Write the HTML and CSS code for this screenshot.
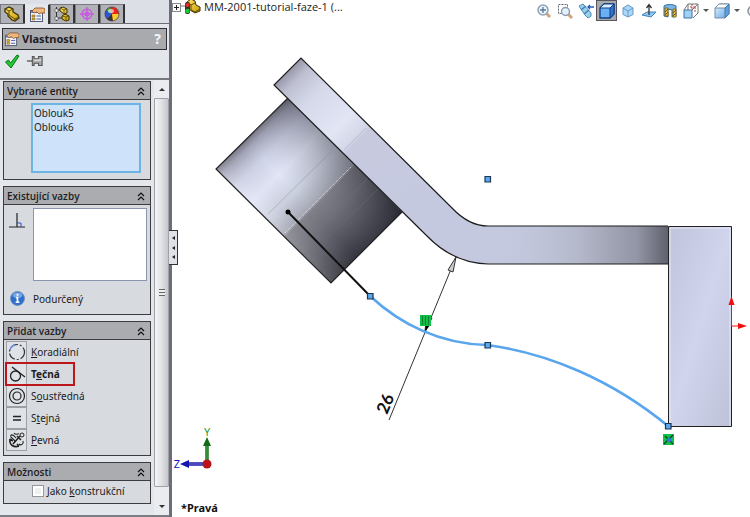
FILE: index.html
```html
<!DOCTYPE html>
<html lang="cs">
<head>
<meta charset="utf-8">
<title>Vlastnosti</title>
<link rel="stylesheet" href="styles.css">
</head>
<body>
<svg class="defs" aria-hidden="true">
  <defs>
    <linearGradient id="yellow" x2="1" y2="1"><stop stop-color="#ffe866"/><stop offset="1" stop-color="#c99a08"/></linearGradient>
    <linearGradient id="cube" x2="1" y2="1"><stop stop-color="#eaf6ff"/><stop offset="1" stop-color="#5ba3e6"/></linearGradient>
    <symbol id="chevrons" viewBox="0 0 8 10"><path d="M1 5l3-3 3 3M1 9l3-3 3 3" fill="none" stroke="#111" stroke-width="1.2"/></symbol>
    <symbol id="props" viewBox="0 0 16 16">
      <rect x="1.500" y="3.500" width="12" height="11" fill="#f2f4fb" stroke="#555b70"/>
      <path d="M2 4h11v2H2z" fill="#687fc0"/>
      <path d="M3 8h3v2H3zM3 11h3v2H3z" fill="#e3a928" stroke="#765a20" stroke-width=".5"/>
      <path d="M7.500 9H12M7.500 12H12" stroke="#4b5f9d"/>
      <path d="M3 4l3-3h8l2 1v4h-4l-2 1-2-2-3 1z" fill="#eeb77e" stroke="#7c4c25" stroke-width=".8"/>
    </symbol>
    <symbol id="part" viewBox="0 0 16 16">
      <path d="M1 3l4-2 4 2v3l5 3 1 3-4 3-3-1-4-4V8L1 6z" fill="url(#yellow)" stroke="#3d3205" stroke-width="1.300"/>
      <path d="M1 3l4 2 4-2M5 5v4l6 4 4-2M11 13v2" fill="none" stroke="#5e4b06"/>
    </symbol>
  </defs>
</svg>
<div class="app">
  <aside class="panel">
    <nav class="tabs" aria-label="Karty">
      <button class="tab" aria-label="Strom"><svg viewBox="0 0 16 16"><use href="#part"/></svg></button>
      <button class="tab tab-active" aria-label="Vlastnosti"><svg viewBox="0 0 16 16"><use href="#props"/></svg></button>
      <button class="tab" aria-label="Konfigurace"><svg viewBox="0 0 16 16"><path d="M2.500 1v14M3 4h5M3 12h5" stroke="#333" fill="none"/><path d="M1 3h3v3H1zM1 11h3v3H1z" fill="#fff" stroke="#555" stroke-width=".7"/><path d="M6 2l3-1 4 2v4l-3 1-4-3zM8 10l3-2 4 2v4l-3 1-4-2z" fill="url(#yellow)" stroke="#3d3205"/><path d="M6 2l4 2 3-1M10 4v4M8 10l4 1 3-1M12 11v4" fill="none" stroke="#5e4b06" stroke-width=".8"/></svg></button>
      <button class="tab" aria-label="Kóty"><svg viewBox="0 0 16 16" fill="none" stroke="#c65be0" stroke-width="1.400"><circle cx="8" cy="8" r="4.800"/><circle cx="8" cy="8" r="1.800"/><path d="M8 1v14M1 8h14"/></svg></button>
      <button class="tab" aria-label="Vzhled"><svg viewBox="0 0 16 16"><circle cx="8" cy="8" r="7" fill="#e9251c"/><path d="M8 8L2 4A7 7 0 0 0 3 13z" fill="#2759d1"/><path d="M8 8L3 13a7 7 0 0 0 6 2z" fill="#30343c"/><path d="M8 8l1 7A7 7 0 0 0 15 8z" fill="#f4ce28"/><path d="M8 8L2 4a7 7 0 0 1 4-3z" fill="#35a947"/><ellipse cx="7" cy="5" rx="3" ry="2" fill="#fff" opacity=".6"/><circle cx="8" cy="8" r="7" fill="none" stroke="#493d44" stroke-width=".7"/></svg></button>
    </nav>
    <header class="title">
      <svg class="title-icon" viewBox="0 0 16 16"><use href="#props"/></svg>
      <h1>Vlastnosti</h1>
      <button class="help" aria-label="Nápověda">?</button>
    </header>
    <div class="actions">
      <button aria-label="OK"><svg viewBox="0 0 16 16"><path d="M1.500 9l3-2 2 3L13 2l2 1-8 12z" fill="#24c836" stroke="#087615"/></svg></button>
      <button aria-label="Připnout"><svg viewBox="0 0 18 16"><path d="M0 8h7" stroke="#555" stroke-width="1.500"/><path d="M6 3h2v2.500h5V3h4v10h-4v-2.500H8V13H6z" fill="#a9aaad" stroke="#555" stroke-width="1.200"/><path d="M8 7h8" stroke="#fff"/></svg></button>
    </div>
    <div class="content">
      <div class="groups">
        <section class="group">
          <h2><button>Vybrané entity<svg><use href="#chevrons"/></svg></button></h2>
          <div class="group-body">
            <ul class="entities"><li>Oblouk5</li><li>Oblouk6</li></ul>
          </div>
        </section>
        <section class="group">
          <h2><button>Existující vazby<svg><use href="#chevrons"/></svg></button></h2>
          <div class="group-body">
            <div class="existing">
              <svg class="relation-icon" viewBox="0 0 16 16"><path d="M8 1v14M0 15h16" fill="none" stroke="#222" stroke-width="1.200"/><path d="M8 11h4v4" fill="none" stroke="#2a55c8"/></svg>
              <ul class="relations-list" aria-label="Existující vazby"></ul>
            </div>
            <p class="status"><svg viewBox="0 0 16 16"><circle cx="8" cy="8" r="7.400" fill="#2d6fc9" stroke="#6c8ebb"/><ellipse cx="8" cy="4.500" rx="5" ry="3" fill="#b5d5f8" opacity=".55"/><path d="M8 3v2M6.500 7H8v5M6 12h4" fill="none" stroke="#fff" stroke-width="1.800"/></svg>Podurčený</p>
          </div>
        </section>
        <section class="group">
          <h2><button>Přidat vazby<svg><use href="#chevrons"/></svg></button></h2>
          <div class="group-body add">
            <button class="relation"><span class="tile"><svg viewBox="0 0 18 18" fill="none"><circle cx="9" cy="9" r="7.500" stroke="#333" stroke-width="1.200" stroke-dasharray="8 2 2 2"/><path d="M2 7a7 7 0 0 1 5-5" stroke="#6c8fd1" stroke-width="1.500"/></svg></span><span><u>K</u>oradiální</span></button>
            <button class="relation highlighted"><span class="tile"><svg viewBox="0 0 18 18" fill="none" stroke="#222" stroke-width="1.300"><circle cx="7.500" cy="11" r="5"/><path d="M4 2l13 10"/></svg></span><span>T<u>e</u>čná</span></button>
            <button class="relation"><span class="tile"><svg viewBox="0 0 18 18" fill="none" stroke="#222" stroke-width="1.200"><circle cx="9" cy="9" r="7.500"/><circle cx="9" cy="9" r="4"/></svg></span><span>S<u>o</u>ustředná</span></button>
            <button class="relation"><span class="tile"><svg viewBox="0 0 18 18" stroke="#222" stroke-width="1.500"><path d="M5 7.500h8M5 11h8"/></svg></span><span>S<u>t</u>ejná</span></button>
            <button class="relation"><span class="tile"><svg viewBox="0 0 18 18" fill="none" stroke="#222"><path d="M5 13l7-8M2 8c-1 6 4 9 9 7M2 8l3 2M11 15l-2-2M9 5l4 4" stroke-width="1.600"/><circle cx="14" cy="4" r="2"/><path d="M8 7C5 3 2 3 3 6c1 2 4 2 4 5M11 13c2 2 5 0 4-3M6 2c2 3 4 0 5 1" stroke-width="1.100"/></svg></span><span><u>P</u>evná</span></button>
          </div>
        </section>
        <section class="group">
          <h2><button>Možnosti<svg><use href="#chevrons"/></svg></button></h2>
          <div class="group-body options">
            <input type="checkbox" id="construction"><label for="construction">Jako <u>k</u>onstrukční</label>
          </div>
        </section>
      </div>
      <div class="scroll" aria-hidden="true">
        <span class="arrow arrow-up"></span>
        <span class="thumb"><i></i></span>
        <span class="arrow arrow-down"></span>
      </div>
    </div>
    <button class="collapse" aria-label="Skrýt panel"><i></i><i></i><i></i></button>
  </aside>
  <main class="view">
    <div class="bar">
      <div class="tree">
        <button class="expand" aria-label="Rozbalit"></button>
        <svg class="tree-icon" viewBox="0 0 20 17"><path d="M0 7h4" stroke="#777"/><path d="M6 3l4-3 4 2 1 4 4 2v4l-5 2-5-3-4-4z" fill="url(#yellow)" stroke="#3d3205"/><path d="M6 4l4 2 4-2M10 6v5l4 2 5-3" fill="none" stroke="#5e4b06"/><rect x="4" y="3" width="5" height="12" rx="2" fill="#333"/><circle cx="6.500" cy="6" r="2" fill="#ed2b20"/><circle cx="6.500" cy="12" r="2.300" fill="#18c83a"/></svg>
        <span>MM-2001-tutorial-faze-1 (...</span>
      </div>
      <div class="tools">
        <button aria-label="Přiblížit vše"><svg viewBox="0 0 16 16"><path d="M10 10l4 4" stroke="#d0a37a" stroke-width="3"/><circle cx="7" cy="7" r="5" fill="#e8f4fd" stroke="#8fa1b5" stroke-width="1.500"/><path d="M7 4v6M4 7h6" stroke="#5f7790" stroke-width="1.300"/></svg></button>
        <button aria-label="Přiblížit výběr"><svg viewBox="0 0 16 16"><path d="M11 11l4 4" stroke="#d0a37a" stroke-width="3"/><path d="M1.500 1.500h9v9h-9z" fill="none" stroke="#667" stroke-dasharray="2 1"/><circle cx="8.500" cy="8.500" r="4" fill="#e3f0fa" stroke="#8a9cb0" stroke-width="1.400"/></svg></button>
        <button aria-label="Předchozí pohled"><svg viewBox="0 0 16 16"><path d="M1 3l4-2 8 9v3l-3 2-3-3z" fill="#9bd0f0" stroke="#4b8db9"/><path d="M3 7l5-4M6 11l5-4" stroke="#3f80ab" stroke-width="1.500"/><path d="M10 4h6M12 2l-2 2 2 2" fill="none" stroke="#2457bb" stroke-width="1.300"/></svg></button>
        <button class="pressed" aria-label="Stínovaný s hranami"><svg viewBox="0 0 16 16"><path d="M1 5l4-4h10v10l-4 4H1z" fill="#69b1f4" stroke="#123c83" stroke-width="1.300"/><path d="M1 5l4-4h10l-4 4z" fill="#d8efff" stroke="#123c83"/><path d="M11 5l4-4v10l-4 4z" fill="#2d76c8" stroke="#123c83"/></svg></button>
        <button aria-label="Izometrický"><svg viewBox="0 0 16 16"><path d="M8 2l5 3v6.500L8 14l-5-2.500V5z" fill="#acd7f8" stroke="#6699c8"/><path d="M3 5l5 3 5-3M8 8v6" fill="none" stroke="#6699c8"/></svg></button>
        <button aria-label="Kolmo k"><svg viewBox="0 0 16 16"><path d="M1 12l5-3h9l-5 5z" fill="#8bc8f3" stroke="#4683b7"/><path d="M8 12V2M5.500 5L8 1.500 10.500 5" fill="none" stroke="#333" stroke-width="1.300"/></svg></button>
        <button aria-label="Řez"><svg viewBox="0 0 16 16"><path d="M2 3c2-2 9-2 12 0v10l-4 1V7L6 6v8l-4-1z" fill="#78b5e8" stroke="#356c9f"/><path d="M3 5h3v8H3zM11 6h3v8h-3z" fill="#f4c637" stroke="#8a6810"/><path d="M3 9l3-3M3 12l3-3M11 10l3-3M11 13l3-3" stroke="#765510"/></svg></button>
        <button aria-label="Orientace pohledu"><svg viewBox="0 0 16 16"><path d="M1 7h8v8H1z" fill="#9fd0f6" stroke="#42729f"/><path d="M1 7l4-6h10v9l-5 5M5 1v6M9 7l6-6" fill="none" stroke="#777"/><path d="M9 1v5M7 4h5M12 4v6" fill="none" stroke="#b84b4b" stroke-dasharray="2 1"/></svg></button>
        <button class="more" aria-label="Další orientace"><i></i></button>
        <button aria-label="Styl zobrazení"><svg viewBox="0 0 16 16"><path d="M1 5l4-4h10v10l-4 4H1z" fill="url(#cube)" stroke="#768da6"/><path d="M1 5l4-4h10l-4 4z" fill="#fff" stroke="#768da6"/><path d="M11 5l4-4v10l-4 4z" fill="#5b9fe2" stroke="#4c7cac"/></svg></button>
        <button class="more" aria-label="Další styly"><i></i></button>
        <button class="cut" aria-label="Skrýt/zobrazit"><svg viewBox="0 0 16 16"><circle cx="11" cy="8" r="5" fill="#eef1f5" stroke="#8c929c" stroke-width="1.500"/></svg></button>
      </div>
    </div>
    <svg class="model" viewBox="172 0 578 517" preserveAspectRatio="xMinYMin meet" role="img" aria-label="Model dílu">
      <defs>
        <linearGradient id="cyl" gradientUnits="userSpaceOnUse" x1="216" y1="169" x2="331" y2="283">
          <stop stop-color="#73727f"/><stop offset=".05" stop-color="#a1a3b6"/><stop offset=".1" stop-color="#b8bbce"/><stop offset=".16" stop-color="#ced2e6"/><stop offset=".3" stop-color="#e2e6f7"/><stop offset=".45" stop-color="#cbd0df"/><stop offset=".58" stop-color="#a5a8b4"/><stop offset=".6" stop-color="#818089"/><stop offset=".72" stop-color="#6d6e77"/><stop offset=".85" stop-color="#53545d"/><stop offset="1" stop-color="#34343d"/>
        </linearGradient>
        <linearGradient id="cylShade" gradientUnits="userSpaceOnUse" x1="216" y1="169" x2="288" y2="98">
          <stop stop-color="#fff" stop-opacity=".18"/><stop offset=".4" stop-color="#889" stop-opacity="0"/><stop offset="1" stop-color="#171822" stop-opacity=".36"/>
        </linearGradient>
        <linearGradient id="plate" gradientUnits="userSpaceOnUse" x1="287" y1="72" x2="440" y2="223">
          <stop stop-color="#9697a7"/><stop offset=".06" stop-color="#bec0d2"/><stop offset=".17" stop-color="#d5d9ea"/><stop offset=".35" stop-color="#e2e5f4"/><stop offset=".44" stop-color="#d3d7e8"/><stop offset=".46" stop-color="#c7cadf"/><stop offset="1" stop-color="#c5c9df"/>
        </linearGradient>
        <linearGradient id="arm" gradientUnits="userSpaceOnUse" x1="488" y1="0" x2="668" y2="0">
          <stop stop-color="#c5c9df" stop-opacity="0"/><stop offset=".5" stop-color="#b4b8ca"/><stop offset=".83" stop-color="#9295a5"/><stop offset="1" stop-color="#60616d"/>
        </linearGradient>
        <linearGradient id="block" x2="1" y2="1"><stop stop-color="#bfc4dc"/><stop offset=".5" stop-color="#d0d4ed"/><stop offset="1" stop-color="#bdc2d8"/></linearGradient>
      </defs>
      <path d="M288 98L216 169 331 283 402 212z" fill="url(#cyl)"/>
      <path d="M288 98L216 169 331 283 402 212z" fill="url(#cylShade)"/>
      <path d="M285 233l66-66" stroke="#e5e6eb" stroke-dasharray="1 1"/>
      <path d="M268 214l63-62M298 247l74-73M309 257l73-72" stroke="#777984" stroke-width=".5" opacity=".7"/>
      <path d="M288 98L216 169 331 283 402 212" fill="none" stroke="#222" stroke-width="1.200"/>
      <path d="M301 58L452 208Q469 226 488 226H668V264H488Q453 263 427 236L274 85z" fill="url(#plate)"/>
      <path d="M488 226h180v38H488z" fill="url(#arm)"/>
      <path d="M668 226H488Q469 226 452 208L301 58 274 85 427 236Q453 263 488 264H668" fill="none" stroke="#1d1d1d" stroke-width="1.200"/>
      <path d="M344 150l22-22" stroke="#aaaebc" stroke-width=".6"/>
      <path d="M668.500 226.500h63v200h-63z" fill="url(#block)" stroke="#222"/>
      <path d="M670 425v-197h60v198" fill="none" stroke="#e7e9f7"/>
      <path d="M288 212l82 84" stroke="#111" stroke-width="2"/><circle cx="288" cy="212" r="2.500"/>
      <g stroke="#333" fill="none"><path d="M389 420l67-163"/><path d="M456 257l-8 13 5 2z" fill="#ccc"/><path d="M425 331l1-10 6-3z" fill="#fff"/></g>
      <path d="M425 332l1-9 4 2z"/>
      <path d="M370 296C400 324 440 344 487 345C548 353 612 380 668 426" fill="none" stroke="#59a5ee" stroke-width="2.600"/>
      <path d="M420 315h11v11h-11z" fill="#0ac244"/><path d="M422.500 316v9M425.500 316v9M428.500 316v9" stroke="#147c35"/>
      <g fill="#5ba8f0" stroke="#1c3550" stroke-width="1.200"><path d="M485 176.500h5.500v5.500H485zM367.500 293.500h5.500v5.500h-5.500zM485 342.500h5.500v5.500H485zM665.500 423.500h5.500v5.500h-5.500z"/></g>
      <path d="M663 434h11v11h-11z" fill="#0ac244"/><path d="M664 444l9-9M665 436l8 8" stroke="#123c30" stroke-width="1.200"/><circle cx="669" cy="440" r="2.200" fill="#3179d1"/>
      <path d="M731.500 326V301M731 326h9" stroke="#e11" fill="none"/><path d="M731.500 296l-3 9h6zM747 326l-9-3v6z" fill="#f00e0e"/>
      <text class="dimension" transform="translate(387 415) rotate(-67)">26</text>
      <path d="M207 464v-20" stroke="#17731d" stroke-width="3.500"/><path d="M207 464v-20" stroke="#4fac54"/><path d="M207 437l-4 9h8z" fill="#116a17"/>
      <path d="M207 464h-20" stroke="#1b1ba6" stroke-width="3.500"/><path d="M207 464h-20" stroke="#7777e0"/><path d="M180 464l9-4v8z" fill="#1515b0"/><circle cx="207" cy="464" r="4.500" fill="#b81218"/>
      <text class="axis axis-y" x="207" y="436">Y</text><text class="axis axis-z" x="177" y="468">Z</text>
    </svg>
    <p class="view-name">*Pravá</p>
  </main>
</div>
</body>
</html>
```
FILE: styles.css
```css
* { box-sizing: border-box; }
body { margin: 0; font: 10px/14px "Noto Sans", "Open Sans", sans-serif; color: #1c1c22; background: #fff; }
h1, h2, p, ul { margin: 0; padding: 0; font-size: inherit; }
ul { list-style: none; }
button { margin: 0; padding: 0; border: 0; background: none; font: inherit; color: inherit; text-align: left; }
svg { display: block; }
.defs { position: absolute; width: 0; height: 0; }
.app { display: flex; min-height: 100vh; }

.panel { position: relative; display: flex; flex-direction: column; flex: none; width: 172px; background: #e3e6eb; border-right: 3px solid #6c6e76; }
.tabs { display: flex; height: 24px; padding-top: 4px; border-bottom: 1px solid #6c6e74; background: #dcdfe5; }
.tab { display: grid; place-items: center; width: 25px; height: 19px; background: #b1b2b7; border: 1px solid #77797e; border-right: 2px solid #333; border-bottom: 0; }
.tab svg { width: 16px; height: 16px; }
.tab-active { height: 20px; background: #e3e6eb; border-color: #e3e6eb; border-right-color: #333; }
.title { display: flex; align-items: center; gap: 3px; height: 22px; margin: 4px 2px 0; padding: 0 5px 0 1px; background: #a9aaae; border: 1px solid #303034; }
.title-icon { width: 15px; height: 15px; }
.title h1 { flex: 1; font: bold 11px/20px "Noto Sans", sans-serif; }
.help { color: #f4f4f6; font-weight: bold; font-size: 14px; }
.actions { display: flex; align-items: center; gap: 7px; height: 30px; padding: 0 4px 6px; border-bottom: 2px solid #77797f; }
.actions svg { height: 16px; width: 16px; }

.content { display: flex; flex: 1; border-bottom: 2px solid #7b7d84; }
.groups { display: flex; flex-direction: column; gap: 6px; flex: 1; padding: 1px 3px 8px; }
.group { border: 1px solid #3b3b40; background: #d7dade; }
.group h2 { background: #abacb0; border-bottom: 1px solid #3b3b40; }
.group h2 button { display: flex; align-items: center; justify-content: space-between; width: 100%; height: 17px; padding: 0 5px 0 3px; font-family: "Open Sans", sans-serif; font-weight: 600; }
.group h2 svg { width: 8px; height: 10px; }
.group-body { padding: 3px; }
.entities { height: 70px; margin: 0 6px 3px 24px; padding: 1px; background: #cee3f9; border: 2px solid #6bb4e5; }
.existing { display: grid; grid-template-columns: 16px 1fr; gap: 8px; padding-left: 2px; }
.relation-icon { width: 16px; height: 16px; margin-top: 4px; }
.relations-list { height: 73px; background: #fff; border: 1px solid #8b95b0; }
.status { display: flex; align-items: center; gap: 8px; margin: 10px 3px 5px; }
.status svg { width: 15px; height: 15px; }
.add { padding: 1px 2px 4px; }
.relation { display: flex; align-items: center; gap: 4px; width: 68px; height: 22px; white-space: nowrap; }
.tile { display: grid; place-items: center; flex: none; width: 21px; height: 22px; background: #dfe2e6; border: 1px solid #9d9fa5; }
.tile svg { width: 18px; height: 18px; }
.highlighted { font-weight: bold; outline: 2px solid #bd171d; outline-offset: -1px; }
.options { display: flex; align-items: center; gap: 3px; padding: 3px 3px 5px 28px; white-space: nowrap; }
.options input { appearance: none; width: 12px; height: 12px; margin: 0; border: 1px solid #95979c; background: #eeeff1; box-shadow: inset 0 0 0 2px #fff; }

.scroll { display: flex; flex-direction: column; width: 15px; background: #ebecef; }
.arrow { display: grid; place-items: center; height: 18px; }
.arrow::before { content: ""; border: 3px solid transparent; }
.arrow-up::before { border-top: 0; border-bottom-color: #333; }
.arrow-down { height: 28px; padding-top: 10px; }
.arrow-down::before { border-bottom: 0; border-top-color: #333; }
.thumb { display: grid; place-items: center; flex: 1; background: linear-gradient(90deg, #f5f5f6, #e1e2e5 50%, #c5c7cd); border: 1px solid #9fa1a8; border-radius: 1px; }
.thumb i { width: 6px; height: 7px; background: repeating-linear-gradient(#666 0 1px, #eee 1px 3px); }
.collapse { position: absolute; top: 230px; right: -9px; display: flex; flex-direction: column; align-items: center; justify-content: space-evenly; width: 9px; height: 35px; background: #dfe1e6; border: 1px solid #333; border-left: 0; z-index: 2; }
.collapse i { border: 2px solid transparent; border-left: 0; border-right: 3px solid #222; }

.view { position: relative; flex: 1; min-width: 0; overflow: hidden; background: #fff; }
.model { width: 100%; }
.bar { position: absolute; top: 0; left: 0; right: 0; display: flex; justify-content: space-between; }
.tree { display: flex; align-items: center; height: 14px; font: 11px/14px "Open Sans", sans-serif; white-space: nowrap; }
.expand { width: 9px; height: 9px; border: 1px solid #888; background: linear-gradient(#222, #222) center / 5px 1px no-repeat, linear-gradient(#222, #222) center / 1px 5px no-repeat; }
.tree-icon { width: 20px; height: 17px; margin-right: 3px; }
.tools { display: flex; }
.tools button { display: grid; place-items: center; width: 21px; height: 21px; }
.tools svg { width: 16px; height: 16px; }
.tools .pressed { background: #a7a9ad; border: 1px solid #55575c; }
.tools .more { width: 10px; }
.more i { border: 3px solid transparent; border-top-color: #555; border-bottom: 0; }
.tools .cut { width: 8px; overflow: hidden; justify-content: start; }
.view-name { position: absolute; left: 9px; bottom: 2px; font: bold 11px/14px "Noto Sans", sans-serif; color: #111; }
.dimension { font: bold 17px Lato, sans-serif; fill: #111; }
.axis { font: 11px "Noto Sans", sans-serif; text-anchor: middle; }
.axis-y { fill: #2f9b34; }
.axis-z { fill: #1717c4; }
```
